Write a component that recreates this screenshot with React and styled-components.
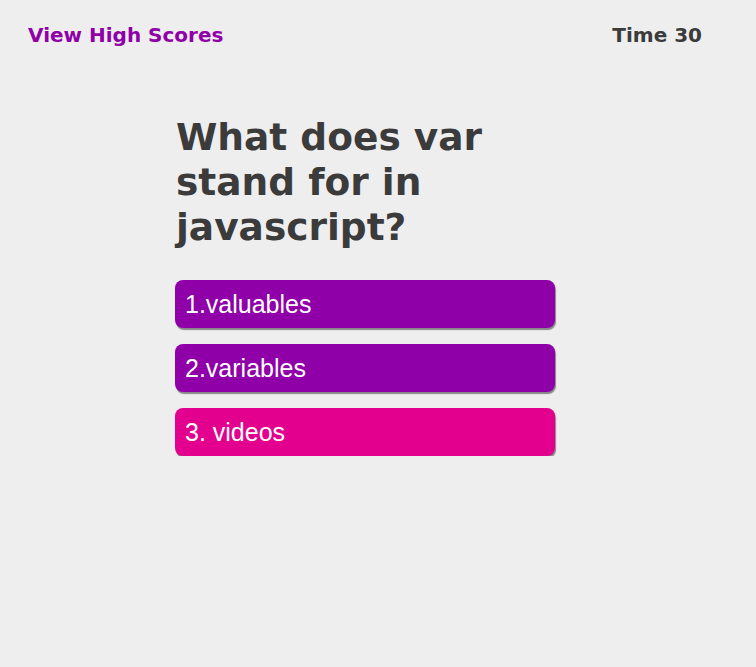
import React from "react";
import styled, { createGlobalStyle } from "styled-components";

const GlobalStyle = createGlobalStyle`
  body {
    margin: 0;
    background: #eeeeee;
    font-family: "DejaVu Sans", Verdana, sans-serif;
  }
`;

const Header = styled.header`
  display: flex;
  justify-content: space-between;
  align-items: center;
  padding: 23px 54px 0 28px;
  font-size: 20px;
  font-weight: bold;
`;

const HighScores = styled.a`
  color: #9000a8;
  text-decoration: none;
  cursor: pointer;
`;

const Timer = styled.div`
  color: #3b3b3b;
`;

const Quiz = styled.main`
  width: 380px;
  margin: 68px 0 0 175px;
`;

const Question = styled.h1`
  margin: 0 0 30px 1px;
  font-size: 37.5px;
  line-height: 45px;
  font-weight: bold;
  color: #3b3b3b;
`;

const Choices = styled.div`
  display: flex;
  flex-direction: column;
  gap: 16px;
`;

const Choice = styled.button`
  height: 48px;
  padding: 1px 0 0 10px;
  border: none;
  border-radius: 8px;
  background: ${(p) => (p.$active ? "#e4008f" : "#8f00a8")};
  box-shadow: 1px 2px 1px #888888;
  color: #ffffff;
  font-family: "Liberation Sans", Arial, sans-serif;
  font-size: 25px;
  text-align: left;
  cursor: pointer;
`;

const answers = ["1.valuables", "2.variables", "3. videos"];

export default function App() {
  return (
    <>
      <GlobalStyle />
      <Header>
        <HighScores>View High Scores</HighScores>
        <Timer>Time 30</Timer>
      </Header>
      <Quiz>
        <Question>What does var stand for in javascript?</Question>
        <Choices>
          {answers.map((a, i) => (
            <Choice key={a} $active={i === 2}>
              {a}
            </Choice>
          ))}
        </Choices>
      </Quiz>
    </>
  );
}
